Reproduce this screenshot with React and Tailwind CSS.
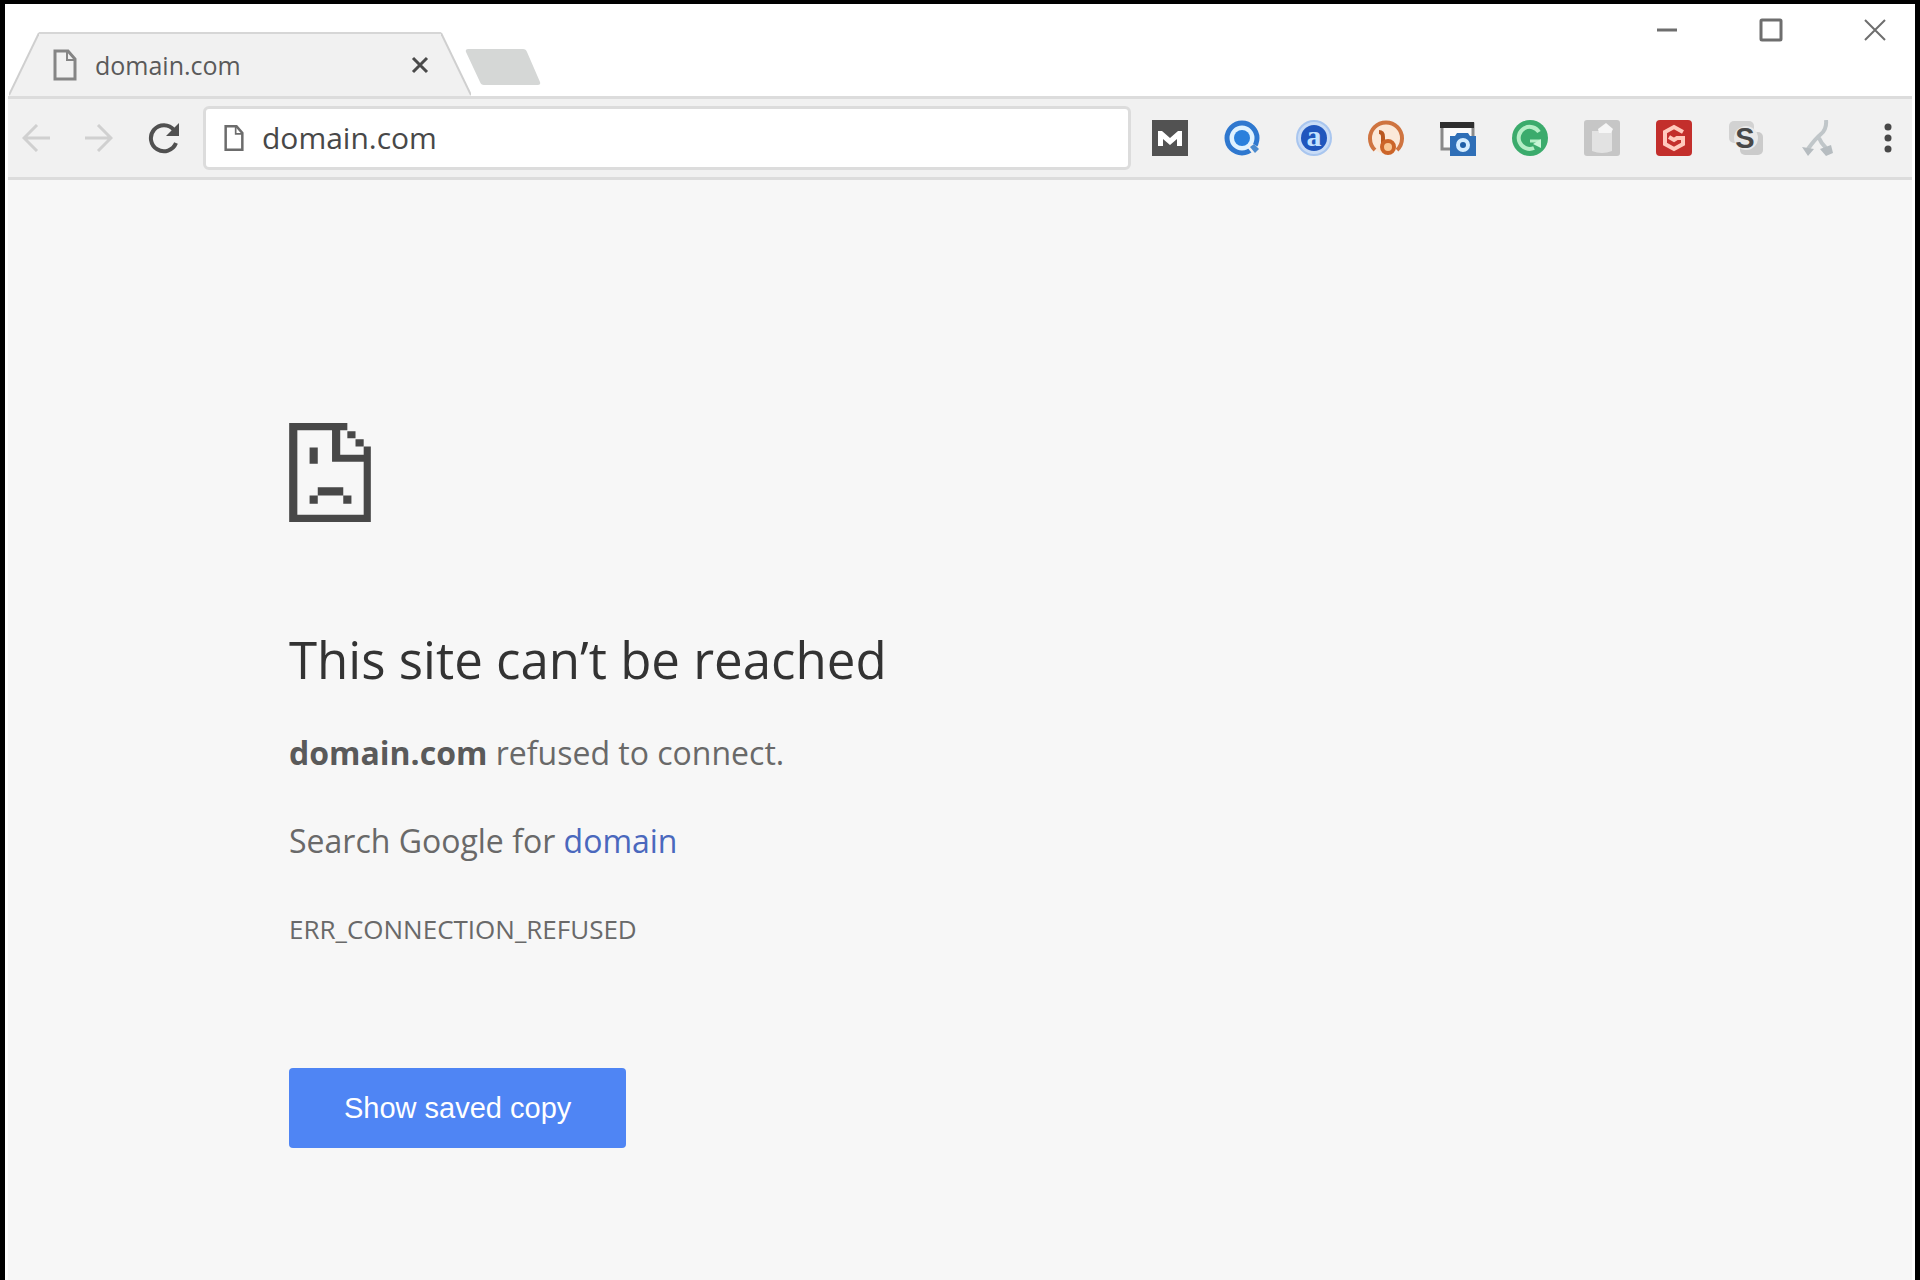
import React, { useState } from 'react';

function PageIcon({ className }) {
  return (
    <svg viewBox="0 0 24 32" className={className} fill="none" stroke="currentColor" strokeWidth="3" aria-hidden="true">
      <path d="M2 2h13l7 8v20H2z" />
      <path d="M14 2v9h8" strokeWidth="2" />
    </svg>
  );
}

function SadPageIcon() {
  return (
    <svg viewBox="0 0 80 97" className="w-[82px] h-[99px]" fill="#484848" aria-hidden="true">
      <path d="M0 0h57v7H50v24h23v-8h7v74H0zM8 7v83h65V38H42V7z" fillRule="evenodd" />
      <path d="M57 8h8v7h-8zM65 16h8v7h-8zM20 24h8v16h-8zM28 63h25v8H28zM20 71h8v8h-8zM53 71h8v8h-8z" />
    </svg>
  );
}

const extensions = [
  {
    name: 'Mozbar',
    icon: (
      <>
        <path d="M0 0h36v36H0z" fill="#525252" />
        <path d="M6 26V11h4l8 7 8-7h4v15h-5v-7l-7 6-7-6v7z" fill="#fff" />
      </>
    ),
  },
  {
    name: 'Search lens',
    icon: (
      <>
        <circle cx="18" cy="18" r="15" fill="#dff2ff" stroke="#2f78cf" strokeWidth="5" />
        <circle cx="18" cy="18" r="8" fill="#2a80dc" />
        <path d="M23 27l5-4 9 6-6 8z" fill="#f1f1f1" />
        <path d="M26 27l4-3 5 5-4 4z" fill="#4a8ace" />
      </>
    ),
  },
  {
    name: 'Alexa',
    icon: (
      <>
        <circle cx="18" cy="18" r="17" fill="#c9dcf6" stroke="#a9c6ef" strokeWidth="2" />
        <circle cx="18" cy="18" r="13" fill="#2056bd" />
        <text x="18" y="26" textAnchor="middle" fontSize="30" fontWeight="700" fontFamily="Liberation Serif, serif" fill="#c3e2ff">a</text>
      </>
    ),
  },
  {
    name: 'Bitly',
    icon: (
      <>
        <circle cx="18" cy="18" r="16" fill="#fbe9d9" />
        <path d="M7 30A16 16 0 1 1 29 30" fill="none" stroke="#cf7440" strokeWidth="4" />
        <path d="M11 12q4 0 4 5v10" fill="none" stroke="#b9571f" strokeWidth="4" />
        <circle cx="20" cy="27" r="6" fill="#f9c795" stroke="#cc6529" strokeWidth="4" />
      </>
    ),
  },
  {
    name: 'Screenshot',
    icon: (
      <>
        <path d="M2 4h31v25H2z" fill="#fafafa" stroke="#8a8a8a" strokeWidth="3" />
        <path d="M0 2h34v6H0z" fill="#2f2f2f" />
        <path d="M10 16h5l2-3h11l2 3h6v20H10z" fill="#2f6fb7" />
        <circle cx="23" cy="25" r="5" fill="#1f5fa8" stroke="#d5edff" strokeWidth="4" />
      </>
    ),
  },
  {
    name: 'Grammarly',
    icon: (
      <>
        <circle cx="18" cy="18" r="18" fill="#3bab6c" />
        <path d="M27 12A11 11 0 1 0 22 28" fill="none" stroke="#b5eec6" strokeWidth="4" />
        <path d="M18 21h10" fill="none" stroke="#b5eec6" strokeWidth="3" />
        <path d="M21 24l8-5v9z" fill="#c9f5d6" />
      </>
    ),
  },
  {
    name: 'Clipboard',
    icon: (
      <>
        <rect width="36" height="36" rx="3" fill="#c6c6c6" />
        <path d="M8 11h20v20q-10 4-20 0z" fill="#e2e2e2" />
        <path d="M14 9l8-6 7 6-2 4H15z" fill="#f6f6f6" />
      </>
    ),
  },
  {
    name: 'Gleam',
    icon: (
      <>
        <rect width="36" height="36" rx="4" fill="#c32f2c" />
        <path d="M27 12l-9-5-9 5v12l9 5 9-5v-6h-6l-3 2-5-3" fill="none" stroke="#ffc9bd" strokeWidth="4" />
      </>
    ),
  },
  {
    name: 'Stylish',
    icon: (
      <>
        <rect x="1" y="1" width="25" height="22" rx="5" fill="#d2d2d2" />
        <rect x="12" y="12" width="23" height="23" rx="5" fill="#cbcbcb" />
        <circle cx="18" cy="18" r="12" fill="#e9e9e9" />
        <text x="17" y="28" textAnchor="middle" fontSize="29" fontWeight="700" fontFamily="Liberation Sans, sans-serif" fill="#484848">S</text>
      </>
    ),
  },
  {
    name: 'Redirect path',
    icon: (
      <>
        <path d="M26 0q1 9-5 14T8 29M19 18q2 5 7 10" fill="none" stroke="#c0c6c9" strokeWidth="4" />
        <path d="M2 27l12 2-6 7zM20 29l11-4 2 8-7 3z" fill="#b6bcc0" />
      </>
    ),
  },
];

function TitleBar() {
  return (
    <div className="flex justify-between h-[92px] bg-white">
      <div className="flex items-end">
        <div className="flex h-16 ml-1">
          <svg viewBox="0 0 30 64" className="w-[30px] h-16" aria-hidden="true">
            <path d="M0 64L30 1v63z" fill="#f1f1f1" />
            <path d="M0 63L30 1" stroke="#cfcfcf" strokeWidth="2" />
          </svg>
          <div className="flex items-center w-[402px] bg-[#f1f1f1] border-t-2 border-[#d6d6d6] pl-3.5 pr-3">
            <PageIcon className="w-6 h-8 text-[#858585]" />
            <span className="flex-1 pl-[18px] text-[25px] leading-8 text-[#5a5a5a]">domain.com</span>
            <button type="button" aria-label="Close tab" className="text-[#4a4a4a]">
              <svg viewBox="0 0 18 18" className="w-[18px] h-[18px]" fill="none" stroke="currentColor" strokeWidth="3">
                <path d="M2 2l14 14M16 2L2 16" />
              </svg>
            </button>
          </div>
          <svg viewBox="0 0 30 64" className="w-[30px] h-16" aria-hidden="true">
            <path d="M0 1v63h30z" fill="#f1f1f1" />
            <path d="M0 1l30 62" stroke="#cfcfcf" strokeWidth="2" />
          </svg>
        </div>
        <button type="button" aria-label="New tab" className="mb-[11px] -ml-1.5">
          <svg viewBox="0 0 76 36" className="w-[76px] h-9" fill="#d5d7d6">
            <path d="M3 0h55q3 0 4 3l13 30q1 3-2 3H19q-3 0-4-3L1 3q-1-3 2-3z" />
          </svg>
        </button>
      </div>
      <div className="flex gap-20 pt-[11px] pr-7 h-10 text-[#6e6e6e]">
        <button type="button" aria-label="Minimize">
          <svg viewBox="0 0 24 24" className="w-6 h-6" fill="none" stroke="currentColor" strokeWidth="3">
            <path d="M2 12h20" />
          </svg>
        </button>
        <button type="button" aria-label="Maximize">
          <svg viewBox="0 0 24 24" className="w-6 h-6" fill="none" stroke="currentColor" strokeWidth="3">
            <rect x="2" y="2" width="20" height="20" rx="1" />
          </svg>
        </button>
        <button type="button" aria-label="Close">
          <svg viewBox="0 0 24 24" className="w-6 h-6" fill="none" stroke="currentColor" strokeWidth="2">
            <path d="M2 2l20 20M22 2L2 22" />
          </svg>
        </button>
      </div>
    </div>
  );
}

function Toolbar() {
  const [url, setUrl] = useState('domain.com');

  return (
    <div className="flex items-center h-[84px] bg-[#f1f1f1] border-t-3 border-b-3 border-[#dcdcdc] pl-3.5 pr-3">
      <div className="flex items-center gap-[35px] pr-[23px]">
        <button type="button" aria-label="Back" className="text-[#d0d0d0]">
          <svg viewBox="0 0 28 28" className="w-7 h-7" fill="none" stroke="currentColor" strokeWidth="3">
            <path d="M28 14H2M15 1L2 14l13 13" />
          </svg>
        </button>
        <button type="button" aria-label="Forward" className="text-[#d0d0d0]">
          <svg viewBox="0 0 28 28" className="w-7 h-7" fill="none" stroke="currentColor" strokeWidth="3">
            <path d="M0 14h26M13 1l13 13-13 13" />
          </svg>
        </button>
        <button type="button" aria-label="Reload" className="text-[#505050]">
          <svg viewBox="0 0 32 32" className="w-8 h-8" fill="none" stroke="currentColor" strokeWidth="4">
            <path d="M28 21A13 13 0 1 1 26 8" />
            <path d="M31 1v13H18z" fill="currentColor" stroke="none" />
          </svg>
        </button>
      </div>
      <label className="flex flex-1 items-center h-16 bg-white border-3 border-[#dcdcdc] rounded-md pl-[18px]">
        <PageIcon className="w-5 h-7 text-[#6c6c6c]" />
        <input
          type="text"
          aria-label="Address"
          value={url}
          onChange={(e) => setUrl(e.target.value)}
          className="flex-1 min-w-0 pl-[18px] text-[30px] leading-10 text-[#484848] outline-none"
        />
      </label>
      <div className="flex items-center gap-9 pl-[21px]">
        {extensions.map((ext) => (
          <button key={ext.name} type="button" aria-label={ext.name}>
            <svg viewBox="0 0 36 36" className="w-9 h-9">{ext.icon}</svg>
          </button>
        ))}
        <button type="button" aria-label="Menu" className="flex justify-center w-6 ml-1">
          <svg viewBox="0 0 8 32" className="w-2 h-8" fill="#484848">
            <circle cx="4" cy="5" r="3.500" />
            <circle cx="4" cy="16" r="3.500" />
            <circle cx="4" cy="27" r="3.500" />
          </svg>
        </button>
      </div>
    </div>
  );
}

function App() {
  return (
    <div className="flex flex-col min-h-screen bg-white border-x-5 border-t-4 border-black font-['Open_Sans','Noto_Sans',sans-serif]">
      <TitleBar />
      <div className="flex flex-col flex-1 px-[3px]">
        <Toolbar />
        <main className="flex-1 bg-[#f7f7f7] pl-[281px] pt-[243px] text-[#696969]">
          <SadPageIcon />
          <h1 className="mt-[99px] text-[51px] leading-[76px] text-[#333333]">This site can’t be reached</h1>
          <p className="mt-9 text-[32px] leading-10">
            <strong className="font-bold text-[#5a5a5a]">domain.com</strong> refused to connect.
          </p>
          <p className="mt-12 text-[32px] leading-10">
            Search Google for <a href="#search" className="text-[#4a68bd]">domain</a>
          </p>
          <p className="mt-12 text-[26px] leading-10">ERR_CONNECTION_REFUSED</p>
          <button
            type="button"
            className="mt-[119px] h-20 px-[55px] rounded-sm bg-[#4f85f4] font-['Liberation_Sans',sans-serif] text-[29px] leading-10 text-white"
          >
            Show saved copy
          </button>
        </main>
      </div>
    </div>
  );
}

export default App;
